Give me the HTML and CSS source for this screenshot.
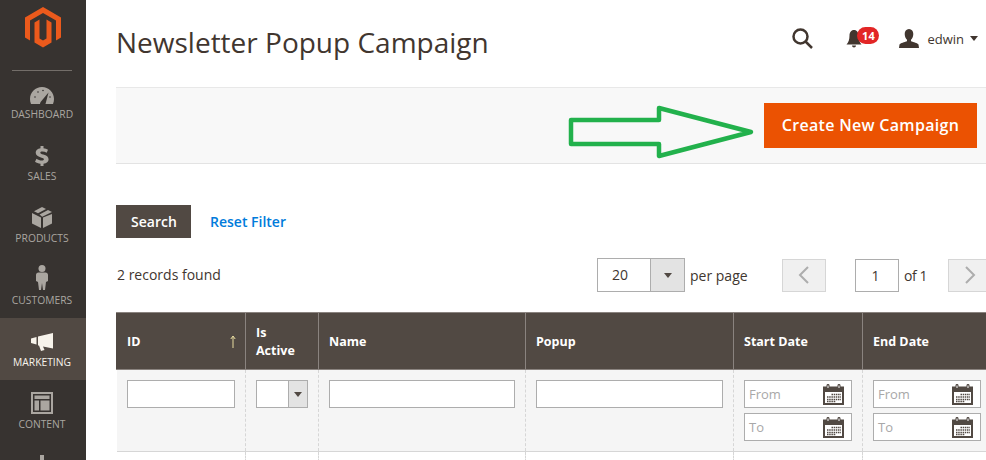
FILE: index.html
```html
<!DOCTYPE html>
<html lang="en">
<head>
<meta charset="utf-8">
<title>Newsletter Popup Campaign</title>
<link rel="stylesheet" href="styles.css">
</head>
<body>
<div class="page">
  <nav class="sidebar">
    <div class="logo">
      <svg width="36" height="41" viewBox="0 0 36 41"><path class="logo-shape" d="M18 0 36 10.5V30.5L31 33.500V13.500L18 6 5 13.500V33.500L0 30.500V10.500Z"/><path class="logo-shape" d="M9.500 15.500 14.500 12.500V31.500L18 33.500 21.500 31.500V12.500L26.500 15.500V35.500L18 40.500 9.500 35.500Z"/></svg>
    </div>
    <a class="nav-item">
      <svg class="nav-icon" width="24" height="18" viewBox="0 0 24 18"><path d="M1 17C.3 15.500 0 13.800 0 12 0 5.400 5.400 0 12 0S24 5.400 24 12C24 13.800 23.700 15.500 23 17H15.500L18.500 5.500 11 14.500C10.300 15.200 10 16 10 17Z"/><circle class="nav-gap" cx="5" cy="10" r=".8"/><circle class="nav-gap" cx="8" cy="5" r=".8"/><circle class="nav-gap" cx="13" cy="3.500" r=".8"/><circle class="nav-gap" cx="20" cy="10" r=".8"/></svg>
      <span>Dashboard</span>
    </a>
    <a class="nav-item">
      <svg class="nav-icon" width="14" height="20" viewBox="0 0 14 20"><path d="M5.500 0H8.500V2.200C10.300 2.400 11.800 3 13 3.800L11.700 6.800C10.300 6 8.800 5.500 7.400 5.500 6 5.500 5.300 6 5.300 6.700 5.300 7.500 6.300 7.900 8.300 8.500 11.700 9.500 13.600 10.700 13.600 13.500 13.600 15.800 11.700 17.400 8.500 17.700V20H5.500V17.700C3.400 17.500 1.500 16.800 0 15.700L1.500 12.700C3.100 13.800 5 14.500 6.600 14.500 8 14.500 8.900 14 8.900 13.200 8.900 12.400 8 12 5.900 11.400 2.500 10.400.7 9.200.7 6.500.7 4.300 2.500 2.600 5.500 2.200Z"/></svg>
      <span>Sales</span>
    </a>
    <a class="nav-item">
      <svg class="nav-icon" width="20" height="21" viewBox="0 0 20 21"><path d="M10 0 14 2 6 6.200 2 4.200ZM16 3 20 5 10.200 9.800 7.500 7.500ZM0 6 9 10.500V21L0 16.500ZM20 7V16.500L11 21V10.500Z"/></svg>
      <span>Products</span>
    </a>
    <a class="nav-item">
      <svg class="nav-icon" width="12" height="25" viewBox="0 0 12 25"><circle cx="6" cy="3.500" r="3.500"/><path d="M2.500 7.500H9.500C11 7.500 12 8.500 12 10V16L10 17 9 25H7L6 18 5 25H3L2 17 0 16V10C0 8.500 1 7.500 2.500 7.500Z"/></svg>
      <span>Customers</span>
    </a>
    <a class="nav-item active">
      <svg class="nav-icon" width="22" height="18" viewBox="0 0 22 18"><path d="M7 3.500 22 0V15.500L12 13.500 13.500 17 10 18 8 12.500H7ZM0 5.500 5.500 4V11.500L0 10Z"/></svg>
      <span>Marketing</span>
    </a>
    <a class="nav-item">
      <svg class="nav-icon" width="22" height="22" viewBox="0 0 22 22"><path fill-rule="evenodd" d="M0 0H22V22H0ZM2 2V20H20V2ZM3.500 3.500H18.500V7H3.500ZM3.500 8.500H8V18.500H3.500ZM9.500 8.500H18.500V18.500H9.500Z"/></svg>
      <span>Content</span>
    </a>
    <a class="nav-item">
      <svg class="nav-icon" width="8" height="20" viewBox="0 0 8 20"><path d="M2 0H6V20H2Z"/></svg>
    </a>
  </nav>

  <main class="main">
    <header class="header">
      <h1 class="title">Newsletter Popup Campaign</h1>
      <div class="tools">
        <svg class="tool-search" width="21" height="21" viewBox="0 0 21 21"><circle class="stroke-dark" cx="8.500" cy="8.500" r="7"/><path class="stroke-dark" d="M13.500 13.500 20 20"/></svg>
        <span class="notice">
          <svg width="16" height="18" viewBox="0 0 16 18"><path class="fill-dark" d="M8 0C11 0 12.500 2.500 12.500 5.500 12.500 9.500 13.500 12.500 15.500 14.500H.5C2.500 12.500 3.500 9.500 3.500 5.500 3.500 2.500 5 0 8 0ZM6 15.500H10C10 16.800 9 17.500 8 17.500S6 16.800 6 15.500Z"/></svg>
          <b class="badge">14</b>
        </span>
        <svg class="tool-user" width="20" height="19" viewBox="0 0 20 19"><path class="fill-dark" d="M10 0C12.800 0 14.300 2.200 14.300 5 14.300 7.500 13.200 9.700 12 10.800V12.300C14.500 13.300 18.500 14 19.500 15.500L20 19H0L.5 15.500C1.500 14 5.500 13.300 8 12.300V10.800C6.800 9.700 5.700 7.500 5.700 5 5.700 2.200 7.200 0 10 0Z"/></svg>
        <span class="user-name">edwin</span>
        <span class="caret"></span>
      </div>
    </header>

    <section class="actions">
      <svg class="arrow" width="186" height="54" viewBox="0 0 186 54"><path d="M3 15H91V3L183 27 91 51V39H3Z"/></svg>
      <button class="primary" type="button">Create New Campaign</button>
    </section>

    <section class="content">
      <div class="filter-actions">
        <button class="search" type="button">Search</button>
        <a class="reset">Reset Filter</a>
      </div>

      <div class="pager-row">
        <span class="records">2 records found</span>
        <div class="pager">
          <div class="per-select"><span class="per-value">20</span><span class="per-toggle"><i class="tri"></i></span></div>
          <span class="pager-text per-label">per page</span>
          <span class="page-btn prev"><svg width="12" height="20" viewBox="0 0 12 20"><path d="M10 2 2 10 10 18"/></svg></span>
          <span class="page-input">1</span>
          <span class="pager-text of-label">of 1</span>
          <span class="page-btn next"><svg width="12" height="20" viewBox="0 0 12 20"><path d="M2 2 10 10 2 18"/></svg></span>
        </div>
      </div>

      <table class="grid">
        <colgroup>
          <col class="c-id"><col class="c-active"><col class="c-name"><col class="c-popup"><col class="c-date"><col class="c-date">
        </colgroup>
        <thead>
          <tr>
            <th><div class="th-sort">ID<svg class="sort" width="6" height="13" viewBox="0 0 6 13"><path d="M3 13V1M.8 4 3 1 5.200 4"/></svg></div></th>
            <th>Is<br>Active</th>
            <th>Name</th>
            <th>Popup</th>
            <th>Start Date</th>
            <th>End Date</th>
          </tr>
        </thead>
        <tbody>
          <tr class="filters">
            <td><div class="field"></div></td>
            <td><div class="field mini"><span class="mini-blank"></span><span class="mini-toggle"><i class="tri"></i></span></div></td>
            <td><div class="field"></div></td>
            <td><div class="field"></div></td>
            <td>
              <div class="field date"><span>From</span><svg class="cal" width="21" height="21" viewBox="0 0 21 21"><use href="#cal"/></svg></div>
              <div class="field date"><span>To</span><svg class="cal" width="21" height="21" viewBox="0 0 21 21"><use href="#cal"/></svg></div>
            </td>
            <td>
              <div class="field date"><span>From</span><svg class="cal" width="21" height="21" viewBox="0 0 21 21"><use href="#cal"/></svg></div>
              <div class="field date"><span>To</span><svg class="cal" width="21" height="21" viewBox="0 0 21 21"><use href="#cal"/></svg></div>
            </td>
          </tr>
          <tr class="empty"><td></td><td></td><td></td><td></td><td></td><td></td></tr>
        </tbody>
      </table>
    </section>
  </main>
</div>
<svg class="defs" width="0" height="0">
  <symbol id="cal" viewBox="0 0 21 21">
    <path fill="#514943" fill-rule="evenodd" d="M0 2.500H3.500V1.500C3.500 .5 4 0 5 0S6.500 .5 6.500 1.500V2.500H14.500V1.500C14.500 .5 15 0 16 0S17.500 .5 17.500 1.500V2.500H21V21H0ZM2 8V19H19V8Z"/>
    <path fill="#fff" d="M4.500 1.500H5.500V4H4.500ZM15.500 1.500H16.500V4H15.500Z"/>
    <g fill="none" stroke="#514943" stroke-width="1.300" stroke-dasharray="1.500 .7">
      <path d="M8.500 10.500H18"/>
      <path d="M4 13H18"/>
      <path d="M4 15.500H18"/>
      <path d="M4 17.500H13"/>
    </g>
  </symbol>
</svg>
</body>
</html>
```
FILE: styles.css
```css
* { box-sizing: border-box; }
html, body { margin: 0; padding: 0; height: 460px; overflow: hidden; background: #fff; }
body { font-family: "Open Sans", sans-serif; color: #41362f; font-size: 14px; }
.defs { position: absolute; }
.page { display: flex; height: 460px; width: 986px; overflow: hidden; }

.sidebar { width: 86px; flex: none; background: #373330; display: flex; flex-direction: column; }
.logo { height: 71px; margin: 0 14px 0 12px; padding: 7px 0 0 13px; border-bottom: 1px solid #736e69; flex: none; width: 60px; }
.logo-shape { fill: #eb5a1c; }
.nav-item { height: 62px; flex: none; display: flex; flex-direction: column; align-items: center; padding-right: 2px; color: #aaa6a0; font-size: 10.3px; line-height: 14px; text-transform: uppercase; }
.nav-item:nth-child(2) { height: 61px; }
.nav-item svg { fill: #aaa6a0; }
.nav-icon { box-sizing: content-box; flex: none; }
.nav-item .nav-gap { fill: #373330; }
.nav-item:nth-child(2) .nav-icon { padding-top: 16px; margin-bottom: 2px; }
.nav-item:nth-child(3) .nav-icon { padding-top: 14px; margin-bottom: 3px; }
.nav-item:nth-child(4) .nav-icon { padding-top: 13px; margin-bottom: 3px; }
.nav-item:nth-child(5) .nav-icon { padding-top: 9px; margin-bottom: 3px; }
.nav-item:nth-child(6) .nav-icon { padding-top: 15px; margin-bottom: 4px; }
.nav-item:nth-child(7) .nav-icon { padding-top: 12px; margin-bottom: 3px; }
.nav-item:nth-child(8) .nav-icon { padding-top: 13px; }
.nav-item.active { background: #514943; color: #f7f3eb; }
.nav-item.active svg { fill: #f7f3eb; }

.main { flex: 1; min-width: 0; padding-left: 30px; }
.header { height: 87px; display: flex; justify-content: space-between; align-items: flex-start; }
.title { margin: 23px 0 0; font-size: 28px; line-height: 38px; font-weight: 400; color: #41362f; }
.tools { display: flex; align-items: center; height: 21px; margin-top: 28px; padding-right: 8px; }
.tool-search { margin-right: 33px; }
.stroke-dark { fill: none; stroke: #41362f; stroke-width: 2.5; }
.fill-dark { fill: #41362f; }
.notice { display: flex; align-items: center; width: 53px; }
.badge { background: #e22626; color: #fff; border-radius: 10px; font: 700 11px/17px "Open Sans", sans-serif; height: 17px; width: 22px; text-align: center; margin: -6px 0 0 -5px; }
.user-name { font-size: 13px; color: #41362f; margin-left: 8px; }
.caret { margin-left: 6px; border: 4px solid transparent; border-top: 5px solid #41362f; border-bottom: 0; }

.actions { height: 77px; background: #f8f8f8; border-top: 1px solid #e8e8e8; border-bottom: 1px solid #e3e3e3; display: flex; justify-content: flex-end; align-items: center; padding-right: 9px; }
.arrow { margin-right: 10px; margin-top: 12px; }
.arrow path { fill: none; stroke: #22b14c; stroke-width: 4.500; stroke-linejoin: round; }
.primary { width: 213px; height: 45px; background: #eb5202; border: 0; color: #fff; font: 600 16px "Open Sans", sans-serif; letter-spacing: .3px; padding: 0 0 2px; }

.content { width: 876px; padding-top: 41px; }
.filter-actions { display: flex; align-items: center; height: 33px; }
.search { width: 75px; height: 33px; background: #514943; color: #fff; border: 0; padding: 0 0 0 1px; font: 600 14px "Open Sans", sans-serif; }
.reset { margin-left: 19px; color: #007bdb; font-weight: 600; font-size: 14px; }
.pager-row { display: flex; justify-content: space-between; align-items: flex-start; height: 74px; padding-top: 20px; }
.records { font-size: 14px; line-height: 34px; margin-left: 1px; }
.pager { display: flex; align-items: center; height: 34px; }
.per-select { display: flex; width: 88px; height: 34px; border: 1px solid #adadad; }
.per-value { flex: 1; padding-left: 14px; font-size: 14px; line-height: 32px; }
.per-toggle { width: 34px; background: #e3e3e3; border-left: 1px solid #adadad; display: flex; align-items: center; justify-content: center; }
.tri { display: block; border: 4px solid transparent; border-top: 5px solid #514943; border-bottom: 0; }
.pager-text { font-size: 14px; }
.per-label { margin-left: 5px; width: 92px; }
.page-btn { width: 44px; height: 33px; background: #f0f0f0; border: 1px solid #d6d6d6; display: flex; align-items: center; justify-content: center; }
.page-btn path { fill: none; stroke: #adadad; stroke-width: 2; }
.page-input { width: 44px; height: 33px; margin-left: 29px; padding-right: 3px; border: 1px solid #adadad; text-align: center; line-height: 31px; }
.of-label { margin-left: 5px; width: 44px; letter-spacing: -.4px; }

.grid { table-layout: fixed; width: 875px; border-collapse: collapse; }
.c-id { width: 129px; }
.c-active { width: 73px; }
.c-name { width: 207px; }
.c-popup { width: 208px; }
.c-date { width: 129px; }
.grid th { background: #514943; color: #fff; font-size: 12.500px; line-height: 18px; font-weight: 700; text-align: left; height: 57px; padding: 1px 10px 0; border: 1px solid #8a837f; border-left-color: #514943; }
.grid th + th { border-left-color: #8a837f; }
.grid th:first-child { border-left-color: #514943; }
.th-sort { display: flex; justify-content: space-between; align-items: center; }
.sort { margin-right: -1px; flex: none; }
.sort path { fill: none; stroke: #e8dca0; stroke-width: 1; }
.filters td { background: #f5f5f5; height: 81px; padding: 10px; vertical-align: top; border-right: 1px dashed #d6d6d6; border-bottom: 1px solid #d6d6d6; }
.empty td { height: 10px; padding: 0; border-right: 1px dashed #d6d6d6; }
.field { height: 28px; background: #fff; border: 1px solid #adadad; }
.mini { display: flex; width: 52px; }
.mini-blank { flex: 1; }
.mini-toggle { width: 19px; background: #e3e3e3; border-left: 1px solid #adadad; display: flex; align-items: center; justify-content: center; }
.date { display: flex; justify-content: space-between; align-items: center; padding: 0 7px 0 4px; color: #a8a8a8; font-size: 13px; }
.date + .date { margin-top: 5px; }
```
